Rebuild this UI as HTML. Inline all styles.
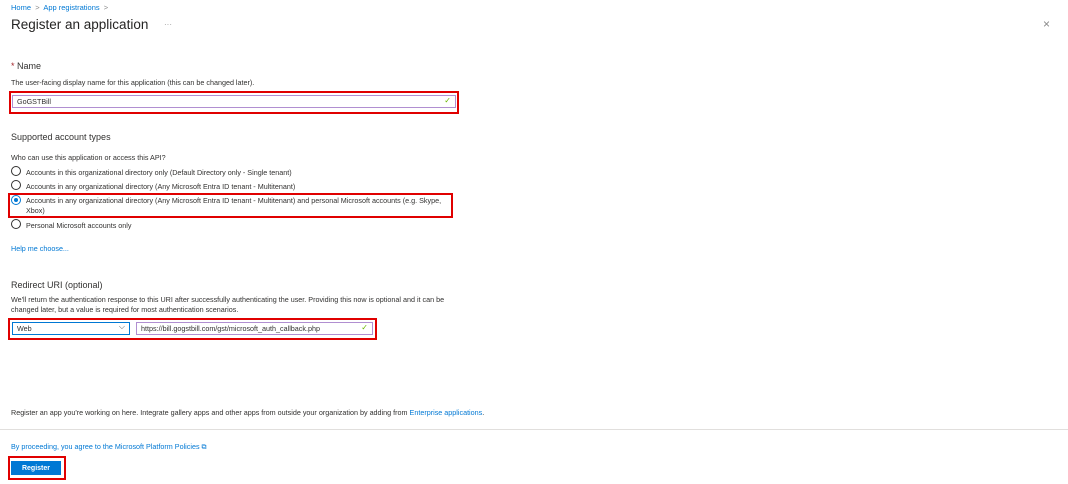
<!DOCTYPE html>
<html><head><meta charset="utf-8"><style>
*{margin:0;padding:0;box-sizing:border-box}
body{width:1068px;height:484px;background:#fff;font-family:"Liberation Sans",sans-serif;color:#323130;position:relative;overflow:hidden}
.a{position:absolute;white-space:nowrap}
.s{font-size:7.2px}
.h{font-size:9px}
.l{color:#0078d4}
.rb{position:absolute;border:2px solid #e00000}
.r{position:absolute;width:10px;height:10px;border:1px solid #323130;border-radius:50%;left:11px}
.in{position:absolute;border:1px solid #b18fd1;background:#fff;font-size:7.2px;padding:2px 4px;height:13px;line-height:8px}
.ck{position:absolute;right:4px;top:1px;color:#6bb700;font-size:8px}
</style></head><body>
<div class="a s l" style="left:11px;top:3px;font-size:7.5px">Home &nbsp;<span style="color:#888">&gt;</span>&nbsp; App registrations &nbsp;<span style="color:#888">&gt;</span></div>
<div class="a" style="left:11px;top:17px;font-size:13.5px;color:#252423">Register an application</div>
<div class="a" style="left:164px;top:20px;font-size:8px;color:#999">···</div>
<div class="a" style="left:1043px;top:17px;font-size:12px;color:#888">×</div>

<div class="a h" style="left:11px;top:61px"><span style="color:#a4262c">*</span> Name</div>
<div class="a s" style="left:11px;top:78px">The user-facing display name for this application (this can be changed later).</div>
<div class="rb" style="left:9px;top:91px;width:450px;height:23px"></div>
<div class="in" style="left:12px;top:95px;width:444px">GoGSTBill<span class="ck">✓</span></div>

<div class="a h" style="left:11px;top:132px">Supported account types</div>
<div class="a s" style="left:11px;top:153px">Who can use this application or access this API?</div>
<div class="r" style="top:166px"></div><div class="a s" style="left:26px;top:168px">Accounts in this organizational directory only (Default Directory only - Single tenant)</div>
<div class="r" style="top:180px"></div><div class="a s" style="left:26px;top:182px">Accounts in any organizational directory (Any Microsoft Entra ID tenant - Multitenant)</div>
<div class="rb" style="left:8px;top:193px;width:445px;height:25px"></div>
<div class="r" style="top:195px;border-color:#0078d4"><div style="position:absolute;left:2px;top:2px;width:4px;height:4px;border-radius:50%;background:#0078d4"></div></div>
<div class="a s" style="left:26px;top:196px;line-height:10px">Accounts in any organizational directory (Any Microsoft Entra ID tenant - Multitenant) and personal Microsoft accounts (e.g. Skype,<br>Xbox)</div>
<div class="r" style="top:219px"></div><div class="a s" style="left:26px;top:221px">Personal Microsoft accounts only</div>
<div class="a s l" style="left:11px;top:244px">Help me choose...</div>

<div class="a h" style="left:11px;top:280px">Redirect URI (optional)</div>
<div class="a s" style="left:11px;top:295px;line-height:10px">We'll return the authentication response to this URI after successfully authenticating the user. Providing this now is optional and it can be<br>changed later, but a value is required for most authentication scenarios.</div>
<div class="rb" style="left:8px;top:318px;width:369px;height:22px"></div>
<div class="in" style="left:12px;top:322px;width:118px;border-color:#0078d4">Web<span style="position:absolute;right:4px;top:0px;font-size:8px;color:#555">⌵</span></div>
<div class="in" style="left:136px;top:322px;width:237px">https://bill.gogstbill.com/gst/microsoft_auth_callback.php<span class="ck">✓</span></div>

<div class="a s" style="left:11px;top:408px">Register an app you're working on here. Integrate gallery apps and other apps from outside your organization by adding from <span class="l">Enterprise applications</span>.</div>
<div class="a" style="left:0;top:429px;width:1068px;height:1px;background:#e1dfdd"></div>
<div class="a s l" style="left:11px;top:442px">By proceeding, you agree to the Microsoft Platform Policies ⧉</div>
<div class="rb" style="left:8px;top:456px;width:58px;height:24px"></div>
<div class="a" style="left:11px;top:461px;width:50px;height:14px;background:#0078d4;color:#fff;font-size:7px;font-weight:bold;text-align:center;line-height:14px"><span style="position:relative;top:1px">Register</span></div>
</body></html>
